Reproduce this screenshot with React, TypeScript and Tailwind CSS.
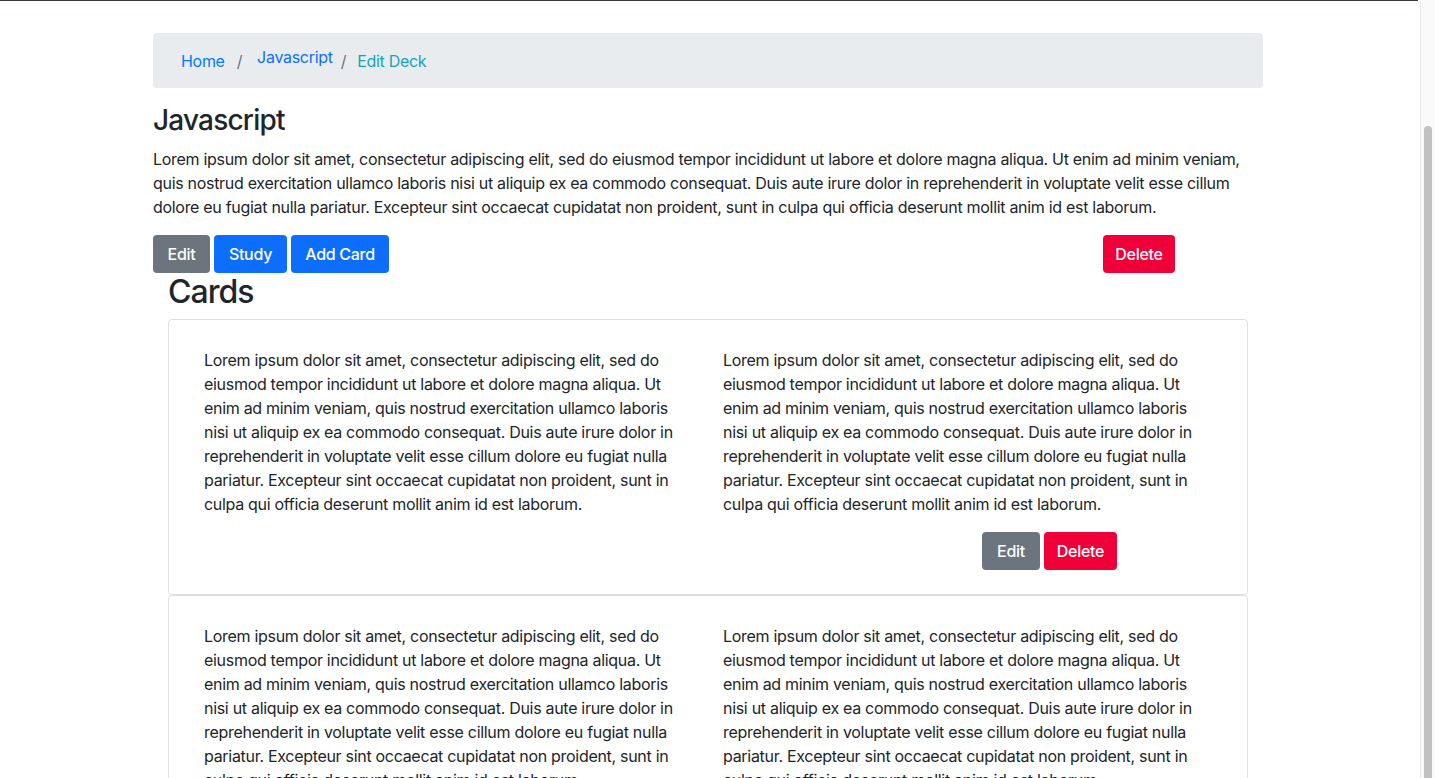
import React from 'react';

const LOREM =
  'Lorem ipsum dolor sit amet, consectetur adipiscing elit, sed do eiusmod tempor incididunt ut labore et dolore magna aliqua. Ut enim ad minim veniam, quis nostrud exercitation ullamco laboris nisi ut aliquip ex ea commodo consequat. Duis aute irure dolor in reprehenderit in voluptate velit esse cillum dolore eu fugiat nulla pariatur. Excepteur sint occaecat cupidatat non proident, sunt in culpa qui officia deserunt mollit anim id est laborum.';

function Btn({
  children,
  color,
  width,
}: {
  children: React.ReactNode;
  color: 'gray' | 'blue' | 'red';
  width: string;
}) {
  const bg =
    color === 'gray' ? 'bg-[#6c757d]' : color === 'blue' ? 'bg-[#0d6efd]' : 'bg-[#ef0039]';
  return (
    <button className={`${bg} ${width} h-[38px] rounded text-center text-base font-medium text-white`}>
      {children}
    </button>
  );
}

function CardRow() {
  return (
    <div className="rounded border border-black/[0.125] px-5 pt-[28px] pb-[24px]">
      <div className="grid grid-cols-2">
        <div className="px-[15px]">
          <p className="leading-6">{LOREM}</p>
        </div>
        <div className="px-[15px]">
          <p className="leading-6">{LOREM}</p>
          <div className="mt-4 flex gap-1 pl-[259px]">
            <Btn color="gray" width="w-[58px]">Edit</Btn>
            <Btn color="red" width="w-[73px]">Delete</Btn>
          </div>
        </div>
      </div>
    </div>
  );
}

export default function App() {
  return (
    <div
      className="flex h-[778px] overflow-hidden bg-white tracking-[-0.3px] text-[#212529]"
      style={{ fontFamily: 'Inter, "Noto Sans", sans-serif' }}
    >
      <div className="flex-1">
        {/* bottom edge of the navbar, scrolled out of view */}
        <div className="h-px w-[1418px] bg-[#343a40]" />

        <div className="ml-[153px] w-[1110px] pt-[32px]">
          {/* Breadcrumb */}
          <nav className="mb-4 flex h-[55px] items-center rounded bg-[#e9ecef] pl-[28px] text-base">
            <a className="text-[#007bff]">Home</a>
            <span className="px-3 text-[#6c757d]">/</span>
            <a className="-mt-2 pl-[3px] text-[#0d6efd]">Javascript</a>
            <span className="px-2 text-[#6c757d]">/</span>
            <span className="pl-[3px] text-[#17a2b8]">Edit Deck</span>
          </nav>

          {/* Deck */}
          <h3 className="mb-[9px] text-[28px] font-medium leading-[1.2] tracking-[-0.8px]">Javascript</h3>
          <p className="mb-4 leading-6">{LOREM}</p>

          <div className="flex gap-1">
            <Btn color="gray" width="w-[57px]">Edit</Btn>
            <Btn color="blue" width="w-[73px]">Study</Btn>
            <Btn color="blue" width="w-[98px]">Add Card</Btn>
            <div className="ml-auto mr-[88px] flex">
              <Btn color="red" width="w-[72px]">Delete</Btn>
            </div>
          </div>

          {/* Cards */}
          <div className="px-[15px]">
            <h2 className="mb-2 text-[32px] font-medium leading-[1.2] tracking-[-1px]">Cards</h2>
            <CardRow />
            <CardRow />
          </div>
        </div>
      </div>

      {/* scrollbar */}
      <div className="w-[15px] shrink-0 border-l border-[#e8e8e8] bg-[#fafafa]">
        <div className="mx-auto mt-[126px] h-[700px] w-[8px] rounded-full bg-[#c1c1c1]" />
      </div>
    </div>
  );
}
